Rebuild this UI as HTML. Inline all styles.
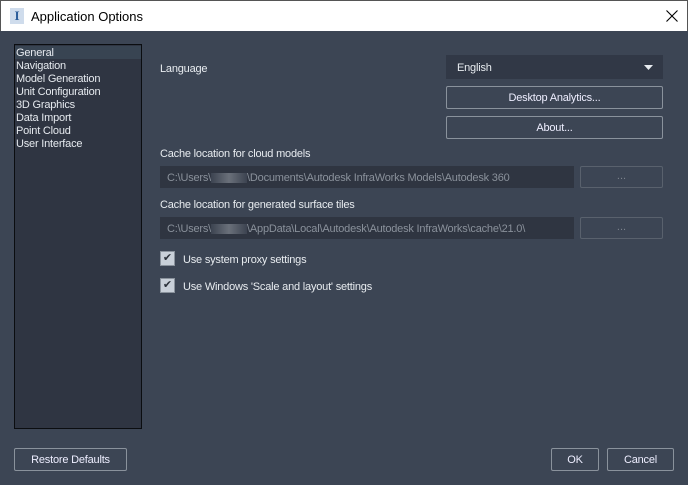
<!DOCTYPE html>
<html><head><style>
*{margin:0;padding:0;box-sizing:border-box}
body{width:688px;height:485px;overflow:hidden;background:#3c4554;font-family:"Liberation Sans",sans-serif;font-size:11px;color:#e8ecf0;position:relative}
.a{position:absolute}
#title{left:0;top:0;width:688px;height:31px;background:#fff;color:#000;font-size:13px;border:1px solid #555;border-bottom:none}
#list{left:14px;top:44px;width:128px;height:385px;background:#2f3542;border:1px solid #0b0d10;padding-top:1px}
#list div{height:13px;line-height:14px;padding-left:1px;color:#e6eaef;letter-spacing:-0.2px}
.btn{border:1px solid #8a929c;border-radius:2px;text-align:center;color:#eef;background:#3c4554}
.inp{background:#2f3541;color:#8a919b;padding-left:7px;line-height:24px;height:22px;white-space:nowrap;overflow:hidden;letter-spacing:-0.2px}
.br{border:1px solid #59616d;border-radius:2px;text-align:center;color:#7b828c;line-height:18px}
.cb{width:15px;height:15px;background:#c9d0d9;border:1px solid #8a929c;color:#2b313a;font-size:11px;text-align:center;line-height:13px}
.blur{display:inline-block;width:36px;height:10px;background:linear-gradient(90deg,#3c4350,#6a707a,#3c4350);vertical-align:middle}
.t{letter-spacing:-0.2px}
</style></head><body>
<div id="title" class="a">
 <div class="a" style="left:9px;top:7px;width:14px;height:16px;background:#cfdcec;color:#2b5d9a;font-weight:bold;font-size:13px;text-align:center;line-height:16px;font-family:'Liberation Serif',serif">I</div>
 <div class="a" style="left:30px;top:8px">Application Options</div>
 <svg class="a" style="left:665px;top:9px" width="12" height="12"><path d="M0.5 0.5L11.5 11.5M11.5 0.5L0.5 11.5" stroke="#000" stroke-width="1.1"/></svg>
</div>
<div id="list" class="a">
 <div style="background:#384452">General</div><div>Navigation</div><div>Model Generation</div><div>Unit Configuration</div><div>3D Graphics</div><div>Data Import</div><div>Point Cloud</div><div>User Interface</div>
</div>
<div class="a t" style="left:160px;top:63px">Language</div>
<div class="a t" style="left:446px;top:55px;width:217px;height:24px;background:#313846;line-height:26px;padding-left:11px">English
 <svg class="a" style="left:198px;top:10px" width="9" height="6"><path d="M0 0H9L4.5 5Z" fill="#e8ecf0"/></svg></div>
<div class="a btn t" style="left:446px;top:86px;width:217px;height:23px;line-height:23px">Desktop Analytics...</div>
<div class="a btn t" style="left:446px;top:116px;width:217px;height:23px;line-height:23px">About...</div>
<div class="a t" style="left:160px;top:148px">Cache location for cloud models</div>
<div class="a inp" style="left:160px;top:166px;width:414px">C:\Users\<span class="blur"></span>\Documents\Autodesk InfraWorks Models\Autodesk 360</div>
<div class="a br" style="left:580px;top:166px;width:83px;height:22px">...</div>
<div class="a t" style="left:160px;top:199px">Cache location for generated surface tiles</div>
<div class="a inp" style="left:160px;top:217px;width:414px">C:\Users\<span class="blur"></span>\AppData\Local\Autodesk\Autodesk InfraWorks\cache\21.0\</div>
<div class="a br" style="left:580px;top:217px;width:83px;height:22px">...</div>
<div class="a cb" style="left:160px;top:251px">✔</div>
<div class="a t" style="left:183px;top:254px">Use system proxy settings</div>
<div class="a cb" style="left:160px;top:278px">✔</div>
<div class="a t" style="left:183px;top:281px">Use Windows 'Scale and layout' settings</div>
<div class="a btn t" style="left:14px;top:448px;width:113px;height:23px;line-height:23px">Restore Defaults</div>
<div class="a btn t" style="left:551px;top:448px;width:48px;height:23px;line-height:23px">OK</div>
<div class="a btn t" style="left:607px;top:448px;width:67px;height:23px;line-height:23px">Cancel</div>
</body></html>
